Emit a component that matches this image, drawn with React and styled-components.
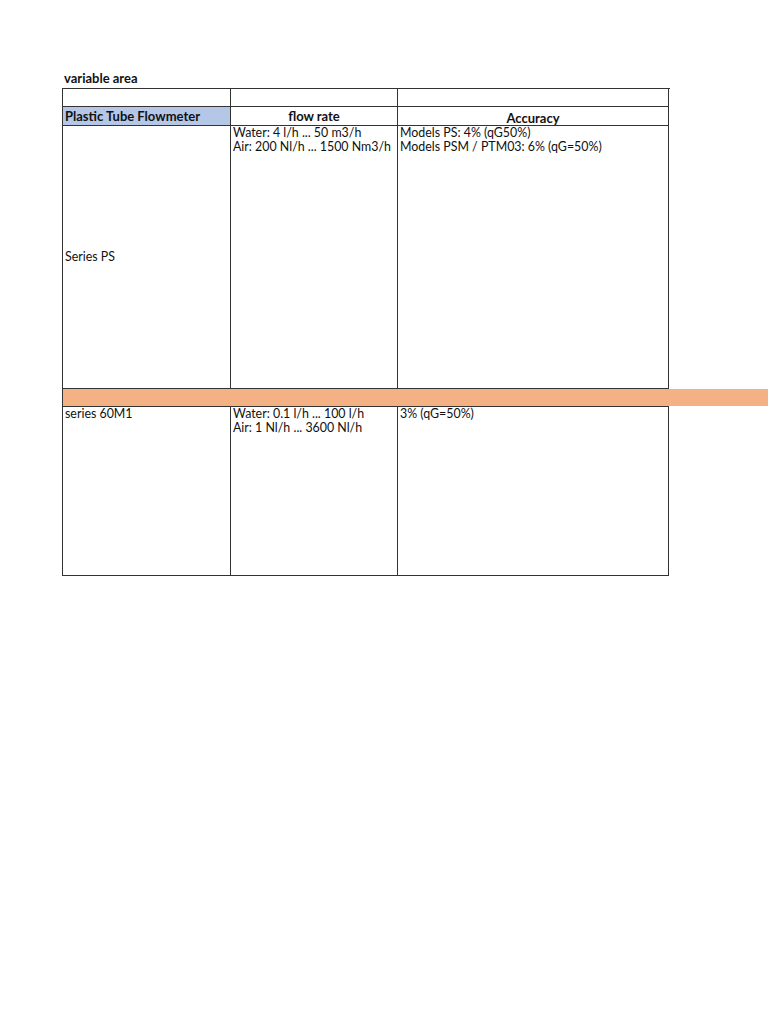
import React from 'react';
import styled, { createGlobalStyle } from 'styled-components';

const GlobalStyle = createGlobalStyle`
  html, body {
    margin: 0;
    padding: 0;
    background: #ffffff;
    overflow: hidden;
  }
  body {
    font-family: Lato, "Liberation Sans", sans-serif;
    color: #111;
  }
`;

const Sheet = styled.div`
  width: 768px;
  height: 1024px;
  padding: 70px 0 0 62px;
  box-sizing: border-box;
`;

const Caption = styled.div`
  font-size: 13px;
  font-weight: 700;
  line-height: 16px;
  padding-left: 2px;
  height: 18px;
`;

const Table = styled.div`
  display: grid;
  grid-template-columns: 168px 167px 271px;
  grid-template-rows: 18px 19px 263px 17px 170px;
  width: 607px;
  border-top: 1px solid #333;
  border-left: 1px solid #333;
`;

const Cell = styled.div`
  box-sizing: border-box;
  border-right: 1px solid #333;
  border-bottom: 1px solid #333;
  border-top: ${(p) => (p.$topLine ? '1px solid #333' : 'none')};
  background: ${(p) => p.$fill || 'transparent'};
  padding: ${(p) => (p.$low ? '3px 2px 0' : '0 2px')};
  font-size: ${(p) => (p.$bold ? '13px' : '12.4px')};
  line-height: 14px;
  font-weight: ${(p) => (p.$bold ? 700 : 400)};
  display: flex;
  flex-direction: column;
  justify-content: ${(p) => p.$valign || 'flex-start'};
  align-items: ${(p) => (p.$center ? 'center' : 'flex-start')};
  white-space: nowrap;
`;

const Band = styled.div`
  grid-column: 1 / -1;
  margin-right: -100px;
  background: #f4b183;
`;

function App() {
  return (
    <Sheet>
      <GlobalStyle />
      <Caption>variable area</Caption>
      <Table>
        <Cell />
        <Cell />
        <Cell />

        <Cell $bold $fill="#b4c7e7" $valign="center">Plastic Tube Flowmeter</Cell>
        <Cell $bold $center $valign="center">flow rate</Cell>
        <Cell $bold $center $low $valign="center">Accuracy</Cell>

        <Cell $valign="center">Series PS</Cell>
        <Cell>
          <span>Water: 4 l/h ... 50 m3/h</span>
          <span>Air: 200 Nl/h ... 1500 Nm3/h</span>
        </Cell>
        <Cell>
          <span>Models PS: 4% (qG50%)</span>
          <span>Models PSM / PTM03: 6% (qG=50%)</span>
        </Cell>

        <Band />

        <Cell $topLine>series 60M1</Cell>
        <Cell $topLine>
          <span>Water: 0.1 l/h ... 100 l/h</span>
          <span>Air: 1 Nl/h ... 3600 Nl/h</span>
        </Cell>
        <Cell $topLine>3% (qG=50%)</Cell>
      </Table>
    </Sheet>
  );
}

export default App;
